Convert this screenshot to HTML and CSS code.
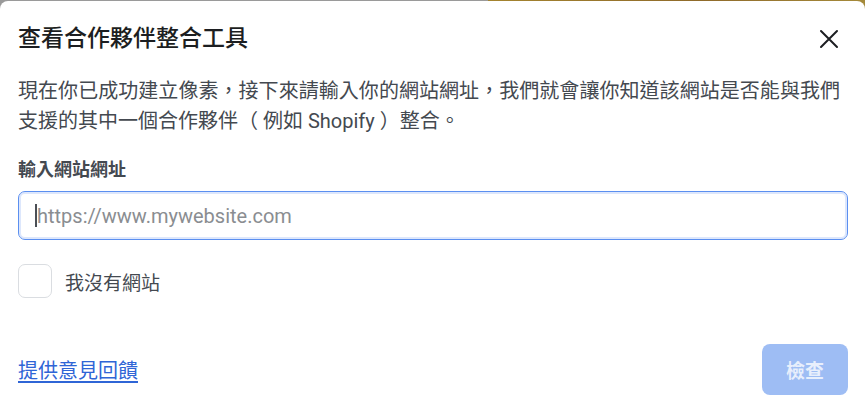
FILE: index.html
```html
<!DOCTYPE html>
<html lang="zh-Hant">
<head>
<meta charset="utf-8">
<title>查看合作夥伴整合工具</title>
<link rel="stylesheet" href="styles.css">
</head>
<body>
<div class="dialog">
  <div class="header">
    <h1 class="title">查看合作夥伴整合工具</h1>
    <button class="close" aria-label="關閉">
      <svg width="20" height="20" viewBox="0 0 20 20"><path d="M2 2 L18 18 M18 2 L2 18" stroke="#1c1e21" stroke-width="2" stroke-linecap="round" fill="none"/></svg>
    </button>
  </div>
  <p class="desc">現在你已成功建立像素，接下來請輸入你的網站網址，我們就會讓你知道該網站是否能與我們支援的其中一個合作夥伴（ 例如 Shopify ）整合。</p>
  <div class="label">輸入網站網址</div>
  <div class="input"><span class="caret"></span><span class="placeholder">https://www.mywebsite.com</span></div>
  <label class="check-row"><span class="checkbox"></span><span class="check-text">我沒有網站</span></label>
  <div class="footer">
    <a class="feedback" href="#">提供意見回饋</a>
    <button class="submit">檢查</button>
  </div>
</div>
</body>
</html>
```
FILE: styles.css
```css
html, body {
  margin: 0;
  padding: 0;
}
body {
  height: 407px;
  overflow: hidden;
  background: linear-gradient(to right, #9a9a9a 0, #9a9a9a 488px, #a4842f 488px, #8f6a2a 700px, #a58a3a 865px);
  font-family: Roboto, "Noto Sans CJK TC", "Noto Sans", sans-serif;
}
.dialog {
  margin-top: 1px;
  height: 420px;
  background: #ffffff;
  border-radius: 8px;
  padding: 0 17px 0 18px;
  box-sizing: border-box;
  display: flex;
  flex-direction: column;
}
.header {
  height: 75px;
  display: flex;
  align-items: center;
  justify-content: space-between;
}
.title {
  margin: 0;
  font-size: 23px;
  font-weight: 500;
  color: #1c1e21;
  line-height: 28px;
}
.close {
  border: 0;
  background: none;
  padding: 0;
  width: 26px;
  height: 26px;
  margin-right: 6px;
  display: flex;
  align-items: center;
  justify-content: center;
}
.desc {
  margin: 0;
  font-size: 20px;
  line-height: 30px;
  color: #444950;
  text-align: justify;
  padding-right: 8px;
}
.label {
  margin-top: 22px;
  font-size: 18px;
  line-height: 24px;
  font-weight: 700;
  color: #444950;
}
.input {
  margin-top: 9px;
  height: 49px;
  box-sizing: border-box;
  border: 1px solid #5b8ff0;
  box-shadow: inset 0 0 0 2px #dde7fc;
  border-radius: 7px;
  display: flex;
  align-items: center;
  padding-left: 16px;
}
.caret {
  width: 2px;
  height: 23px;
  background: #4b4f56;
}
.placeholder {
  font-size: 20px;
  color: #8a8d91;
}
.check-row {
  margin-top: 24px;
  display: flex;
  align-items: center;
  gap: 13px;
}
.checkbox {
  width: 34px;
  height: 34px;
  box-sizing: border-box;
  border: 1px solid #dadde1;
  border-radius: 7px;
}
.check-text {
  font-size: 19px;
  color: #444950;
}
.footer {
  margin-top: 46px;
  display: flex;
  align-items: center;
  justify-content: space-between;
}
.feedback {
  font-size: 20px;
  color: #2f65d6;
  text-decoration: underline;
  text-underline-offset: 3px;
}
.submit {
  width: 86px;
  height: 51px;
  border: 0;
  border-radius: 8px;
  background: #9ebdf4;
  color: #e8effc;
  font-family: Roboto, "Noto Sans CJK TC", sans-serif;
  font-size: 19px;
  font-weight: 700;
}
```
